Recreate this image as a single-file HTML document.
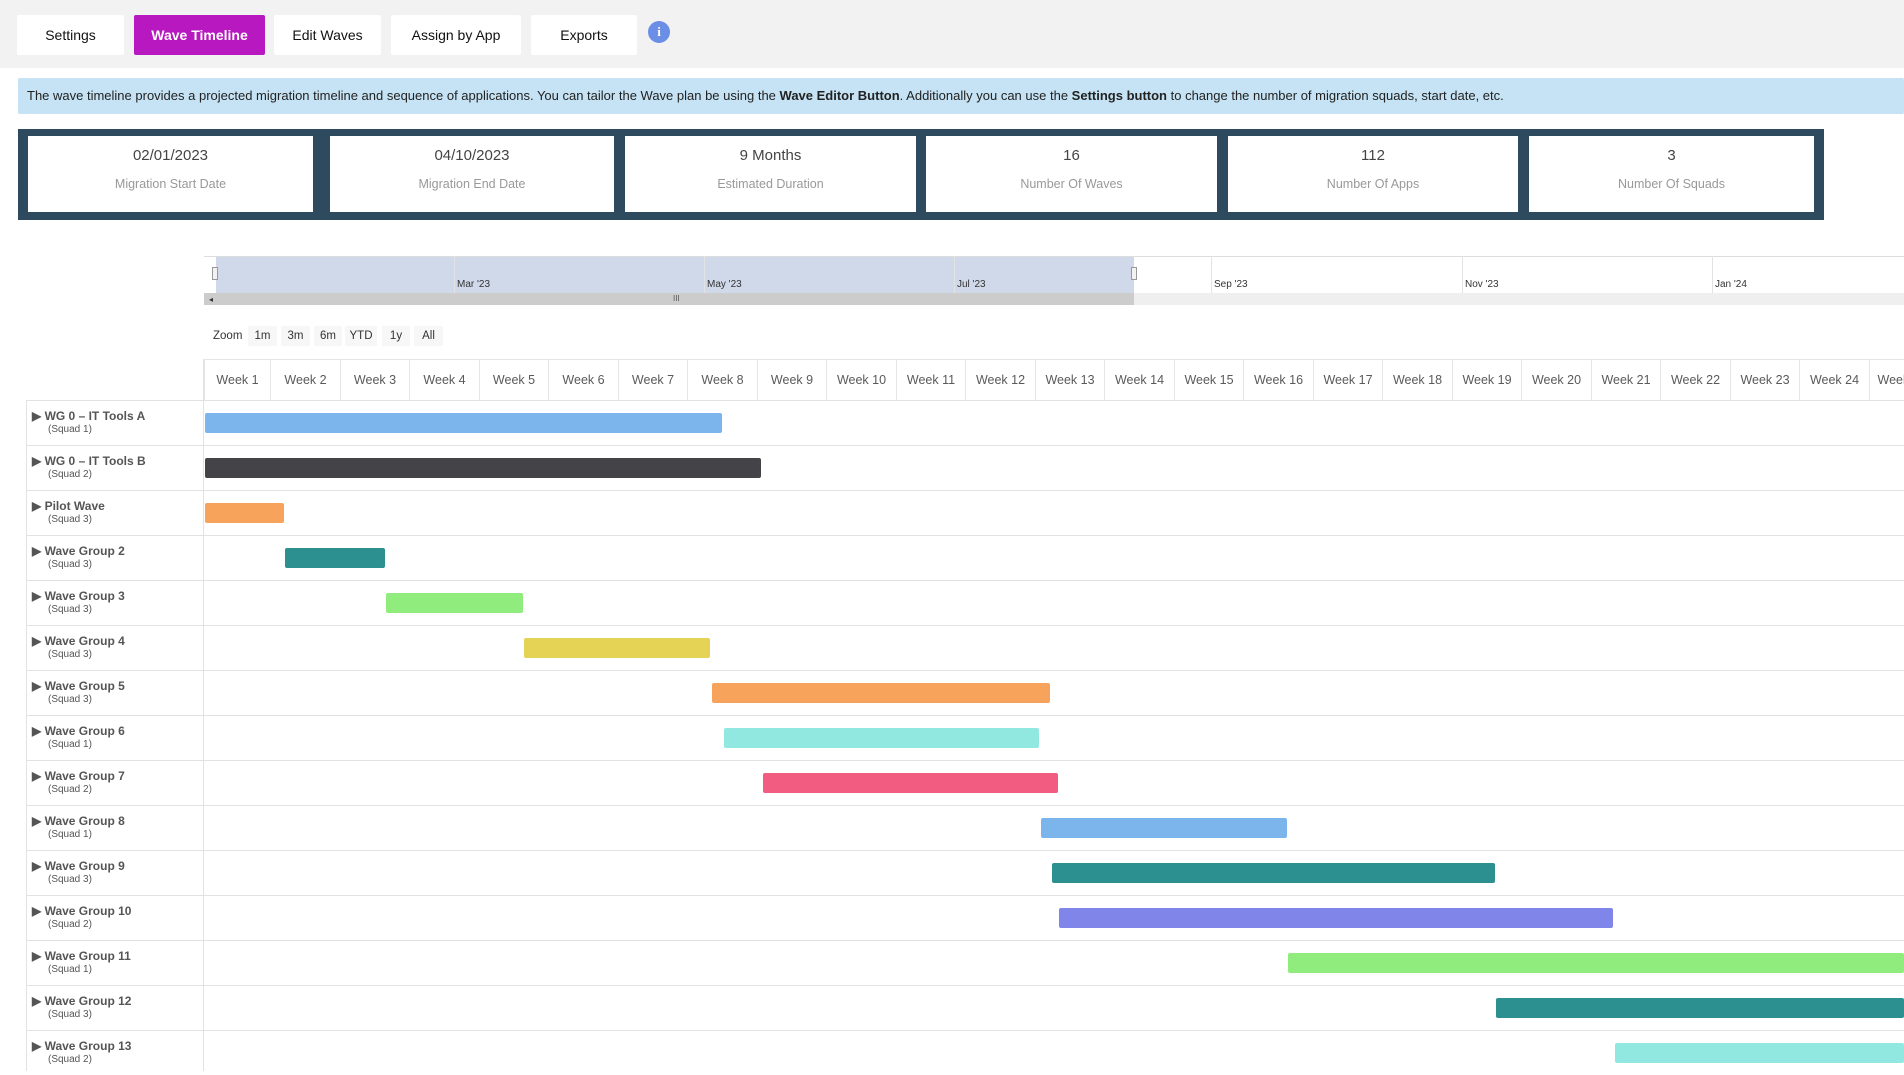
<!DOCTYPE html>
<html><head><meta charset="utf-8"><style>
*{margin:0;padding:0;box-sizing:border-box}
body{width:1904px;height:1071px;overflow:hidden;background:#fff;font-family:"Liberation Sans",sans-serif;position:relative;color:#333}
.a{position:absolute}
.top{left:0;top:0;width:1904px;height:68px;background:#f2f2f2}
.btn{top:15px;height:40px;background:#fff;font-size:14px;color:#111;text-align:center;line-height:40px;border-radius:2px}
.info{left:18px;top:78px;width:1886px;height:36px;background:#c5e3f4;font-size:13px;line-height:36px;padding-left:9px;color:#222;border-radius:2px;white-space:nowrap}
.stats{left:18px;top:129px;width:1806px;height:91px;background:#2d4a5f}
.card{top:136px;height:76px;background:#fff;text-align:center}
.card .v{font-size:15px;color:#444;margin-top:11px}
.card .l{font-size:12.5px;color:#999;margin-top:13px}
.nav{left:204px;top:256px;width:1700px;height:49px;border-top:1px solid #ddd}
.tick{top:256px;width:1px;height:37px;background:#e3e3e3}
.ml{top:279px;font-size:10px;color:#333}
.zb{top:326px;height:20px;background:#f7f7f7;font-size:11.5px;color:#333;text-align:center;line-height:20px}
.wk{top:359px;height:41px;border-left:1px solid #e6e6e6;border-top:1px solid #e6e6e6;font-size:12.5px;color:#5a5a5a;text-align:center;line-height:41px;white-space:nowrap;overflow:hidden}
.row{left:26px;width:1878px;height:45px;border-top:1px solid #e2e2e2}
.lab{left:32px;font-size:12px;font-weight:bold;color:#555;white-space:nowrap}
.lab small{display:block;font-weight:normal;font-size:10px;color:#555;margin-left:16px;margin-top:1px}
.bar{height:20px;border-radius:2px}
</style></head><body>
<div class="a top"></div>
<div class="a btn" style="left:17px;width:107px">Settings</div>
<div class="a btn" style="left:134px;width:131px;background:#b718c0;color:#fff;font-weight:bold">Wave Timeline</div>
<div class="a btn" style="left:274px;width:107px">Edit Waves</div>
<div class="a btn" style="left:391px;width:130px">Assign by App</div>
<div class="a btn" style="left:531px;width:106px">Exports</div>
<div class="a" style="left:648px;top:21px;width:22px;height:22px;border-radius:50%;background:#6b8ee6;color:#fff;font-weight:bold;font-size:13px;text-align:center;line-height:22px;font-family:'Liberation Serif',serif">i</div>
<div class="a info">The wave timeline provides a projected migration timeline and sequence of applications. You can tailor the Wave plan be using the <b>Wave Editor Button</b>. Additionally you can use the <b>Settings button</b> to change the number of migration squads, start date, etc.</div>
<div class="a stats"></div>
<div class="a card" style="left:28px;width:285px"><div class="v">02/01/2023</div><div class="l">Migration Start Date</div></div>
<div class="a card" style="left:330px;width:284px"><div class="v">04/10/2023</div><div class="l">Migration End Date</div></div>
<div class="a card" style="left:625px;width:291px"><div class="v">9 Months</div><div class="l">Estimated Duration</div></div>
<div class="a card" style="left:926px;width:291px"><div class="v">16</div><div class="l">Number Of Waves</div></div>
<div class="a card" style="left:1228px;width:290px"><div class="v">112</div><div class="l">Number Of Apps</div></div>
<div class="a card" style="left:1529px;width:285px"><div class="v">3</div><div class="l">Number Of Squads</div></div>

<div class="a nav"></div>
<div class="a" style="left:216px;top:257px;width:918px;height:36px;background:#d0d9ea"></div>
<div class="a" style="left:204px;top:293px;width:1700px;height:12px;background:#efefef"></div>
<div class="a" style="left:204px;top:293px;width:930px;height:12px;background:#cccccc"></div>
<div class="a" style="left:209px;top:295px;font-size:8px;color:#333">◂</div>
<div class="a" style="left:673px;top:294px;font-size:8px;color:#555">III</div>
<div class="a" style="left:212px;top:267px;width:6px;height:13px;border:1px solid #999;background:#f2f2f2"></div>
<div class="a" style="left:1131px;top:267px;width:6px;height:13px;border:1px solid #999;background:#f2f2f2"></div>
<div class="a tick" style="left:454px"></div><div class="a ml" style="left:457px">Mar '23</div>
<div class="a tick" style="left:704px"></div><div class="a ml" style="left:707px">May '23</div>
<div class="a tick" style="left:954px"></div><div class="a ml" style="left:957px">Jul '23</div>
<div class="a tick" style="left:1211px"></div><div class="a ml" style="left:1214px">Sep '23</div>
<div class="a tick" style="left:1462px"></div><div class="a ml" style="left:1465px">Nov '23</div>
<div class="a tick" style="left:1712px"></div><div class="a ml" style="left:1715px">Jan '24</div>

<div class="a" style="left:213px;top:326px;font-size:11.5px;line-height:20px;color:#333">Zoom</div>
<div class="a zb" style="left:248px;width:29px">1m</div>
<div class="a zb" style="left:281px;width:29px">3m</div>
<div class="a zb" style="left:314px;width:28px">6m</div>
<div class="a zb" style="left:345px;width:32px">YTD</div>
<div class="a zb" style="left:382px;width:28px">1y</div>
<div class="a zb" style="left:414px;width:29px">All</div>

<div class="a wk" style="left:204px;width:66px">Week 1</div>
<div class="a wk" style="left:270px;width:70px">Week 2</div>
<div class="a wk" style="left:339.5px;width:70px">Week 3</div>
<div class="a wk" style="left:409px;width:70px">Week 4</div>
<div class="a wk" style="left:478.5px;width:70px">Week 5</div>
<div class="a wk" style="left:548px;width:70px">Week 6</div>
<div class="a wk" style="left:617.5px;width:70px">Week 7</div>
<div class="a wk" style="left:687px;width:70px">Week 8</div>
<div class="a wk" style="left:756.5px;width:70px">Week 9</div>
<div class="a wk" style="left:826px;width:70px">Week 10</div>
<div class="a wk" style="left:895.5px;width:70px">Week 11</div>
<div class="a wk" style="left:965px;width:70px">Week 12</div>
<div class="a wk" style="left:1034.5px;width:70px">Week 13</div>
<div class="a wk" style="left:1104px;width:70px">Week 14</div>
<div class="a wk" style="left:1173.5px;width:70px">Week 15</div>
<div class="a wk" style="left:1243px;width:70px">Week 16</div>
<div class="a wk" style="left:1312.5px;width:70px">Week 17</div>
<div class="a wk" style="left:1382px;width:70px">Week 18</div>
<div class="a wk" style="left:1451.5px;width:70px">Week 19</div>
<div class="a wk" style="left:1521px;width:70px">Week 20</div>
<div class="a wk" style="left:1590.5px;width:70px">Week 21</div>
<div class="a wk" style="left:1660px;width:70px">Week 22</div>
<div class="a wk" style="left:1729.5px;width:70px">Week 23</div>
<div class="a wk" style="left:1799px;width:70px">Week 24</div>
<div class="a wk" style="left:1868.5px;width:70px;text-align:left;padding-left:8px">Week 25</div>

<div class="a" style="left:26px;top:400px;width:1px;height:671px;background:#e2e2e2"></div>
<div class="a" style="left:203px;top:359px;width:1px;height:712px;background:#e2e2e2"></div>

<div class="a row" style="top:400px"></div><div class="a row" style="top:445px"></div><div class="a row" style="top:490px"></div><div class="a row" style="top:535px"></div><div class="a row" style="top:580px"></div><div class="a row" style="top:625px"></div><div class="a row" style="top:670px"></div><div class="a row" style="top:715px"></div><div class="a row" style="top:760px"></div><div class="a row" style="top:805px"></div><div class="a row" style="top:850px"></div><div class="a row" style="top:895px"></div><div class="a row" style="top:940px"></div><div class="a row" style="top:985px"></div><div class="a row" style="top:1030px"></div>

<div class="a lab" style="top:409px">▶ WG 0 – IT Tools A<small>(Squad 1)</small></div>
<div class="a lab" style="top:454px">▶ WG 0 – IT Tools B<small>(Squad 2)</small></div>
<div class="a lab" style="top:499px">▶ Pilot Wave<small>(Squad 3)</small></div>
<div class="a lab" style="top:544px">▶ Wave Group 2<small>(Squad 3)</small></div>
<div class="a lab" style="top:589px">▶ Wave Group 3<small>(Squad 3)</small></div>
<div class="a lab" style="top:634px">▶ Wave Group 4<small>(Squad 3)</small></div>
<div class="a lab" style="top:679px">▶ Wave Group 5<small>(Squad 3)</small></div>
<div class="a lab" style="top:724px">▶ Wave Group 6<small>(Squad 1)</small></div>
<div class="a lab" style="top:769px">▶ Wave Group 7<small>(Squad 2)</small></div>
<div class="a lab" style="top:814px">▶ Wave Group 8<small>(Squad 1)</small></div>
<div class="a lab" style="top:859px">▶ Wave Group 9<small>(Squad 3)</small></div>
<div class="a lab" style="top:904px">▶ Wave Group 10<small>(Squad 2)</small></div>
<div class="a lab" style="top:949px">▶ Wave Group 11<small>(Squad 1)</small></div>
<div class="a lab" style="top:994px">▶ Wave Group 12<small>(Squad 3)</small></div>
<div class="a lab" style="top:1039px">▶ Wave Group 13<small>(Squad 2)</small></div>

<div class="a bar" style="top:413px;left:205px;width:517px;background:#7cb5ec"></div>
<div class="a bar" style="top:458px;left:205px;width:556px;background:#434348"></div>
<div class="a bar" style="top:503px;left:205px;width:79px;background:#f7a35c"></div>
<div class="a bar" style="top:548px;left:285px;width:100px;background:#2b908f"></div>
<div class="a bar" style="top:593px;left:386px;width:137px;background:#90ed7d"></div>
<div class="a bar" style="top:638px;left:524px;width:186px;background:#e4d354"></div>
<div class="a bar" style="top:683px;left:712px;width:338px;background:#f7a35c"></div>
<div class="a bar" style="top:728px;left:724px;width:315px;background:#91e8e1"></div>
<div class="a bar" style="top:773px;left:763px;width:295px;background:#f15c80"></div>
<div class="a bar" style="top:818px;left:1041px;width:246px;background:#7cb5ec"></div>
<div class="a bar" style="top:863px;left:1052px;width:443px;background:#2b908f"></div>
<div class="a bar" style="top:908px;left:1059px;width:554px;background:#8085e9"></div>
<div class="a bar" style="top:953px;left:1288px;width:616px;background:#90ed7d"></div>
<div class="a bar" style="top:998px;left:1496px;width:408px;background:#2b908f"></div>
<div class="a bar" style="top:1043px;left:1615px;width:289px;background:#91e8e1"></div>
</body></html>
